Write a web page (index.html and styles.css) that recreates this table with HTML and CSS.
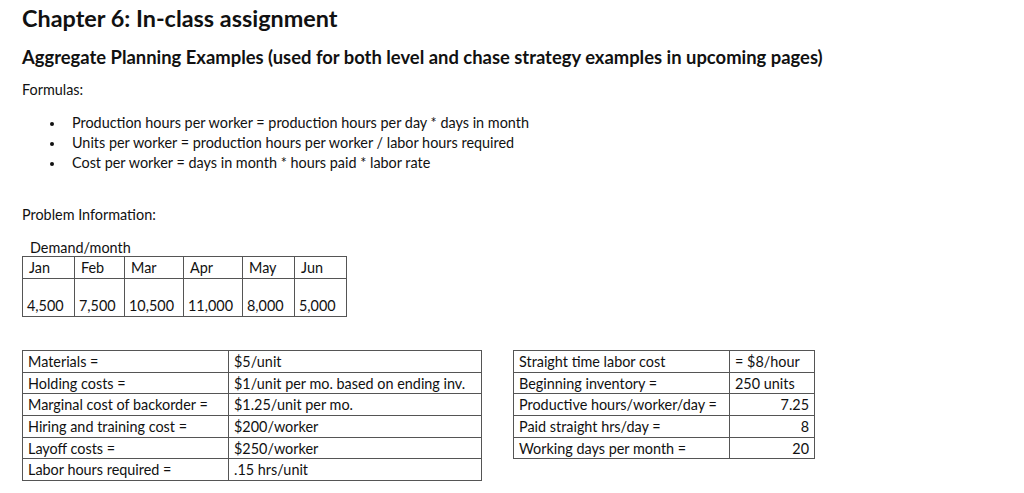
FILE: index.html
```html
<!DOCTYPE html>
<html>
<head>
<meta charset="utf-8">
<link rel="stylesheet" href="styles.css">
</head>
<body>
<div class="page">
  <h1 class="title">Chapter 6: In-class assignment</h1>
  <h2 class="subtitle">Aggregate Planning Examples (used for both level and chase strategy examples in upcoming pages)</h2>
  <p class="label formulas">Formulas:</p>
  <ul class="bullets">
    <li>Production hours per worker = production hours per day * days in month</li>
    <li>Units per worker = production hours per worker / labor hours required</li>
    <li>Cost per worker = days in month * hours paid * labor rate</li>
  </ul>
  <p class="label problem">Problem Information:</p>
  <p class="caption">Demand/month</p>
  <table class="demand">
    <colgroup><col class="c52"><col class="c50"><col class="c59"><col class="c59"><col class="c52"><col class="c52"></colgroup>
    <tr class="head"><td>Jan</td><td>Feb</td><td>Mar</td><td>Apr</td><td>May</td><td>Jun</td></tr>
    <tr class="vals"><td>4,500</td><td>7,500</td><td>10,500</td><td>11,000</td><td>8,000</td><td>5,000</td></tr>
  </table>
  <div class="tables">
    <table class="info costs">
      <colgroup><col class="w206"><col class="w253"></colgroup>
      <tr><td>Materials =</td><td>$5/unit</td></tr>
      <tr><td>Holding costs =</td><td>$1/unit per mo. based on ending inv.</td></tr>
      <tr><td>Marginal cost of backorder =</td><td>$1.25/unit per mo.</td></tr>
      <tr><td>Hiring and training cost =</td><td>$200/worker</td></tr>
      <tr><td>Layoff costs =</td><td>$250/worker</td></tr>
      <tr><td>Labor hours required =</td><td>.15 hrs/unit</td></tr>
    </table>
    <table class="info labor">
      <colgroup><col class="w216"><col class="w85"></colgroup>
      <tr><td>Straight time labor cost</td><td>= $8/hour</td></tr>
      <tr><td>Beginning inventory =</td><td>250 units</td></tr>
      <tr><td>Productive hours/worker/day =</td><td class="num">7.25</td></tr>
      <tr><td>Paid straight hrs/day =</td><td class="num">8</td></tr>
      <tr><td>Working days per month =</td><td class="num">20</td></tr>
    </table>
  </div>
</div>
</body>
</html>
```

FILE: styles.css
```css
html, body {
  margin: 0;
  padding: 0;
  background: #ffffff;
}
body {
  font-family: Lato, "Open Sans", "Liberation Sans", sans-serif;
  color: #111111;
  width: 1024px;
  height: 493px;
  overflow: hidden;
}
.page {
  padding: 4px 0 0 22px;
}
.title {
  margin: 0;
  font-size: 23.4px;
  font-weight: 700;
  line-height: 28px;
  height: 28px;
}
.subtitle {
  margin: 14px 0 0 0;
  font-size: 18.4px;
  font-weight: 700;
  line-height: 22px;
  height: 22px;
}
.label {
  margin: 0;
  font-size: 14.4px;
  line-height: 18px;
}
.formulas {
  margin-top: 13px;
}
.bullets {
  margin: 14px 0 0 0;
  padding: 0 0 0 50px;
  list-style: none;
  font-size: 14.4px;
  line-height: 20px;
}
.bullets li {
  position: relative;
}
.bullets li::before {
  content: "";
  position: absolute;
  left: -22px;
  top: 9px;
  width: 4px;
  height: 4px;
  border-radius: 50%;
  background: #111;
}
.problem {
  margin-top: 33px;
}
.caption {
  margin: 15px 0 0 8px;
  font-size: 14.4px;
  line-height: 17px;
}
table {
  border-collapse: collapse;
  table-layout: fixed;
  font-size: 14.4px;
}
td {
  border: 1px solid #555555;
  padding: 0 6px;
  white-space: nowrap;
  overflow: hidden;
}
.demand {
  width: 325px;
}
.demand .head td {
  height: 21px;
  vertical-align: middle;
}
.demand .vals td {
  height: 35px;
  vertical-align: bottom;
  padding: 0 4px 2px 4px;
}
.c52 { width: 52px; }
.c50 { width: 50px; }
.c59 { width: 59px; }
.tables {
  display: flex;
  align-items: flex-start;
  gap: 31px;
  margin-top: 33px;
}
.info td {
  height: 19.7px;
  padding: 1px 5px 0 5px;
  line-height: 18px;
}
.costs { width: 459px; }
.labor { width: 301px; }
.w206 { width: 206px; }
.w253 { width: 253px; }
.w216 { width: 216px; }
.w85 { width: 85px; }
.num { text-align: right; }
```
